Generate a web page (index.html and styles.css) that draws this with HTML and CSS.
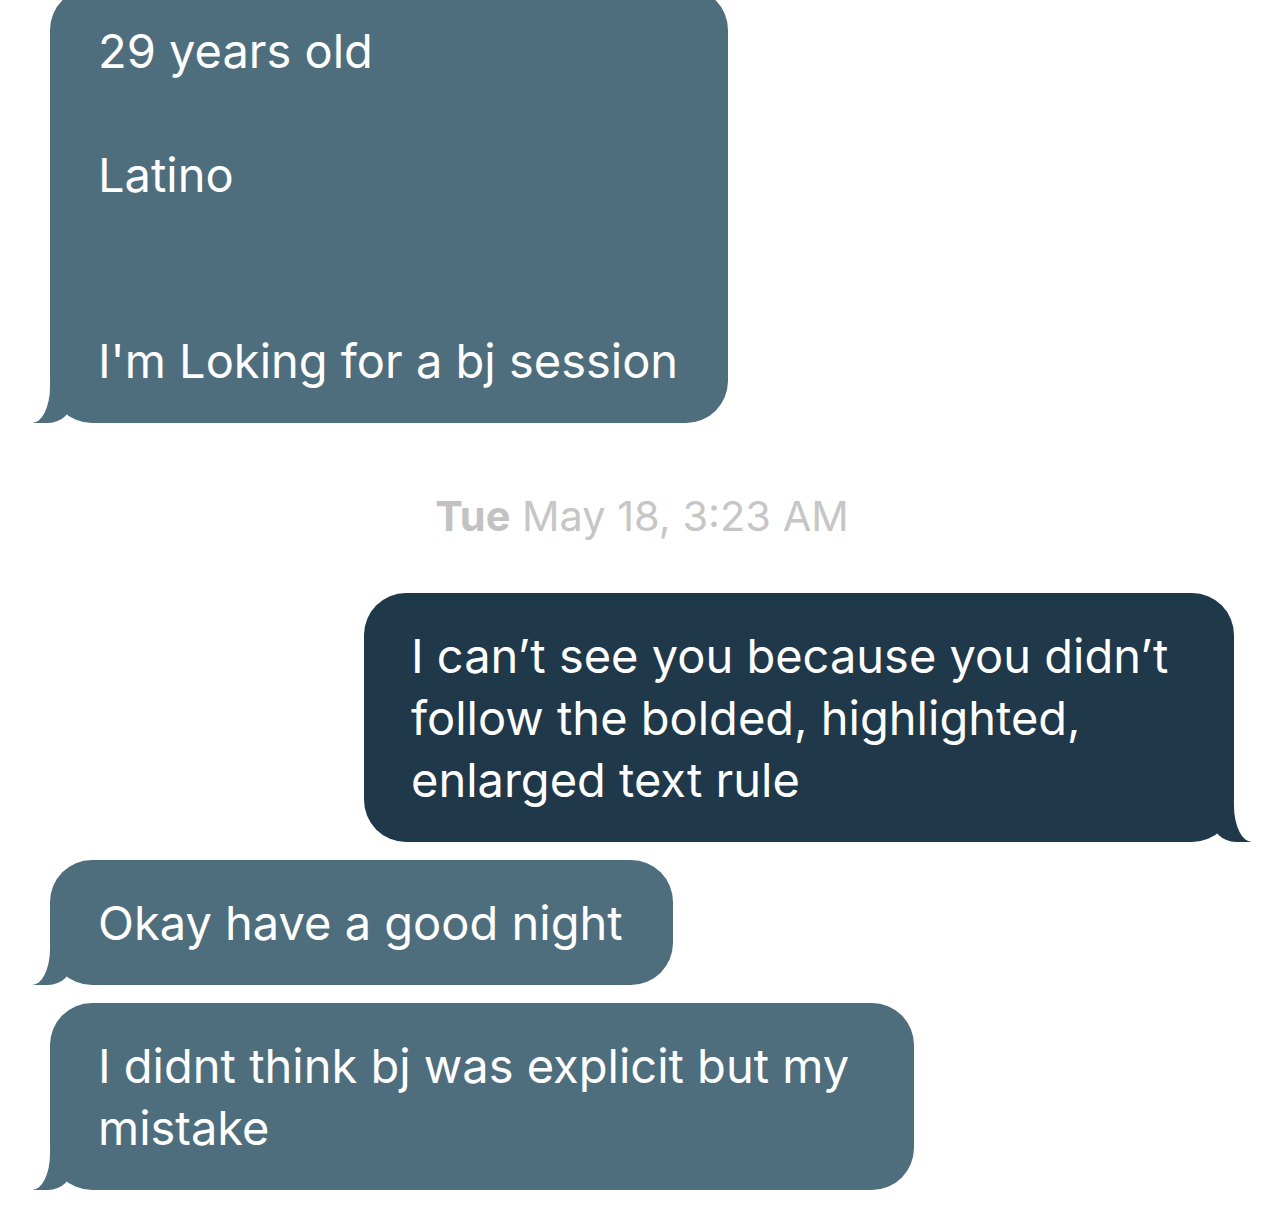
FILE: index.html
```html
<!DOCTYPE html>
<html lang="en">
  <head>
    <meta charset="UTF-8" />
    <meta name="viewport" content="width=device-width,initial-scale=1.0" />
    <title>Messages</title>
    <link rel="stylesheet" href="styles.css">
  </head>
  <body>
    <div class="thread">
      <div class="row in">
        <div class="bubble received first">29 years old<br><br>Latino<br><br><br>I'm Loking for a bj session</div>
      </div>

      <div class="stamp"><b>Tue</b> May 18, 3:23 AM</div>

      <div class="row out">
        <div class="bubble sent">I can’t see you because you didn’t follow the bolded, highlighted, enlarged text rule</div>
      </div>
      <div class="row in">
        <div class="bubble received">Okay have a good night</div>
      </div>
      <div class="row in">
        <div class="bubble received">I didnt think bj was explicit but my mistake</div>
      </div>
    </div>
  </body>
</html>
```

FILE: styles.css
```css
* {
  margin: 0;
  padding: 0;
  box-sizing: border-box;
}
html, body {
  background: #fff;
  overflow: hidden;
}
body {
  font-family: "Inter", "Liberation Sans", sans-serif;
  color: #fff;
}
.thread {
  display: flex;
  flex-direction: column;
  gap: 18px;
  margin-top: -12px;
  padding: 0 50px;
}
.row {
  display: flex;
}
.row.in {
  justify-content: flex-start;
}
.row.out {
  justify-content: flex-end;
}
.bubble {
  position: relative;
  padding: 32px 50px 31px 48px;
  border-radius: 42px;
  font-size: 47px;
  line-height: 62px;
}
.received {
  max-width: 864px;
  background: #4f6e7d;
}
.sent {
  max-width: 870px;
  background: #1f384a;
  padding: 32px 48px 31px 47px;
}

/* tails */
.bubble::before,
.bubble::after {
  content: "";
  position: absolute;
  bottom: 0;
  height: 40px;
}
.received::before {
  left: -17px;
  width: 40px;
  background: #4f6e7d;
  border-bottom-right-radius: 25px;
}
.received::after {
  left: -30px;
  width: 30px;
  background: #fff;
  border-bottom-right-radius: 18px 36px;
}
.sent::before {
  right: -17px;
  width: 40px;
  background: #1f384a;
  border-bottom-left-radius: 25px;
}
.sent::after {
  right: -30px;
  width: 30px;
  background: #fff;
  border-bottom-left-radius: 18px 36px;
}

.stamp {
  text-align: center;
  color: #c6c6c6;
  font-size: 41.5px;
  line-height: 48px;
  margin: 51px 0 35px;
}
.stamp b {
  font-weight: 700;
  color: #c2c2c2;
}
```
